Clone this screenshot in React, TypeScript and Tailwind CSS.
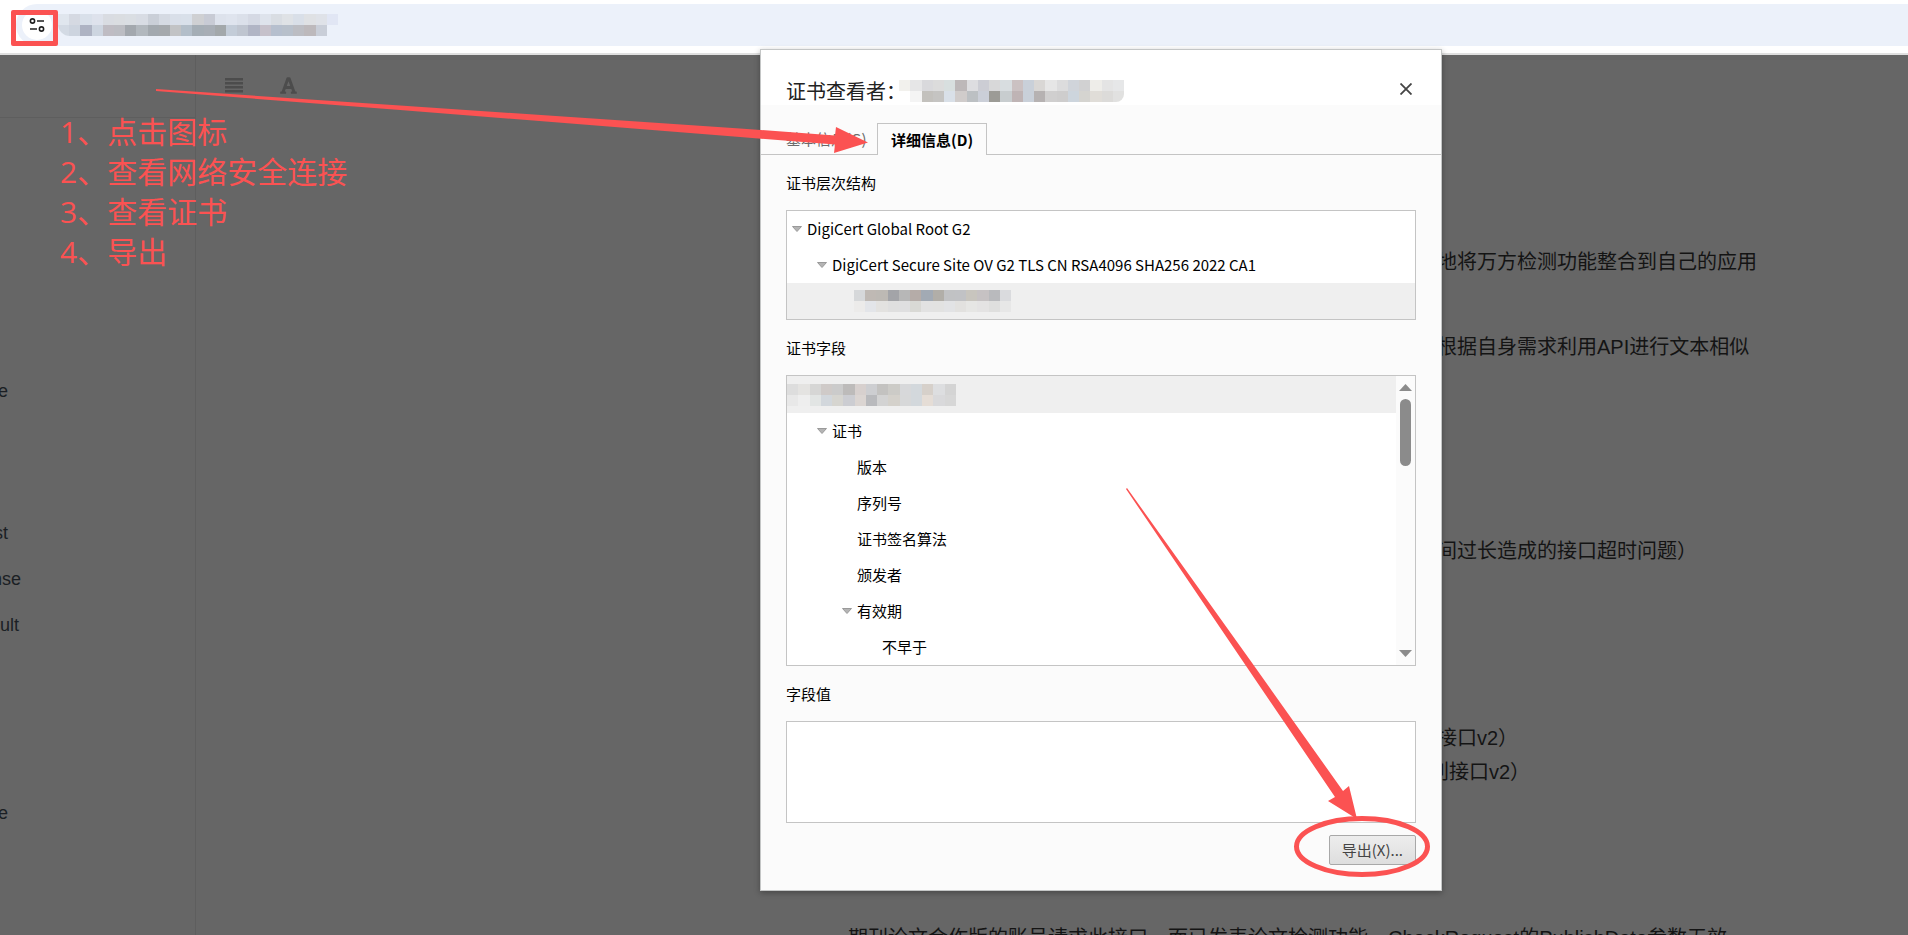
import { FaFont } from "react-icons/fa";

type TreeItem = {
  label?: string;
  level: number;
  open?: boolean;
};

const chain: TreeItem[] = [
  { label: "DigiCert Global Root G2", level: 0, open: true },
  { label: "DigiCert Secure Site OV G2 TLS CN RSA4096 SHA256 2022 CA1", level: 1, open: true },
];

const fields: TreeItem[] = [
  { label: "证书", level: 1, open: true },
  { label: "版本", level: 2 },
  { label: "序列号", level: 2 },
  { label: "证书签名算法", level: 2 },
  { label: "颁发者", level: 2 },
  { label: "有效期", level: 2, open: true },
  { label: "不早于", level: 3 },
];

const steps = ["1、点击图标", "2、查看网络安全连接", "3、查看证书", "4、导出"];

const urlBlocks = [
  "e0e6ee d5d9e2 d9e0ea dee2ec d9dce2 dadde1 dadee3 d8dce4 cacfd8 d5dae3 d9dfe9 d9e0ea cfd0d3 c8cbd5 dde2ec dfe4ee dbe0ea d5d9e4 dee3ec d9dde3 dfe2e6 d9dfe8 dfe1e4 dfe2e8 e1e6f4",
  "d3dae4 cdd4df aeb3c3 cdd5e0 bfbcc3 bcbdc3 a3a8ae b2b8be a3a9af a5a9ad c2c3c5 b3bec9 a5aeb6 a8aeb6 a3a8ab c3ccd8 bfc5d0 b1b5c5 c6c1cb b6bfce b8c0cb bcbdc3 bdb9bc c9ced8 ecf1fa",
];

const titleBlocks = [
  "f2f1ed e6e6e7 d9d9dc dcdcdc d8dfdf bdb8b9 dddde0 cccdd4 d8d8d9 d8dde0 cbc1c2 c9d0d9 d9d7d5 e6e6e6 dcdcdd d0d4da d1d1d2 eeede9 e4e4e4 e6e7e8",
  "ffffff f4f4f4 c3c1bd c5c4c2 d9e0e8 d0cccb bcc0c3 cbcfd8 9c9b96 c8cdcf bfb4b5 c9d0d9 b6b2b2 d0cfcf cecdcd cdd5dd d5d4d0 e0ddd8 dcdbd9 e1e1e0",
];

const leafBlocks = [
  "d6d8da bfb9b4 bdb9b4 a3a4a8 b7b7b7 b5aca8 a2aab4 b1aea8 c1c2c4 c1c2c5 c8c5be c6c2c3 b9babd dadbde",
  "ecebea e3e5e9 e3e2e0 dfdfdf dfdfe0 d9d9d5 e2e2e2 e2e2e1 e2e3e5 e2e1df e6e6e4 e4e3e3 dfdfde e7e7e7",
];

const fieldBlocks = [
  "dddddd e4e3e1 d6d6d5 cfcac8 cbcbcb bdbbba d7d0ce cdced1 c3c2c0 cccbc7 d7d8da d3d8dc d6d0ca dddee0 d4d4d4",
  "e8e8e8 eeeeee e2e5e4 d2d7dc d6d5d0 cccdd2 dbd5d2 b9babd d3d3d3 d4d1cb d7d8d9 d3d8dc e5ddd6 d9d9db d7d7d7",
];

function Mosaic({ rows }: { rows: string[] }) {
  return (
    <div aria-hidden="true" className="flex w-full flex-col">
      {rows.map((row) => (
        <div key={row} className="flex">
          {row.split(" ").map((color, i) => (
            <span key={i} className="h-[11px] flex-1" style={{ backgroundColor: `#${color}` }} />
          ))}
        </div>
      ))}
    </div>
  );
}

function TreeRow({ label, level, open }: TreeItem) {
  return (
    <li className="flex h-9 items-center gap-[5px]" style={{ paddingLeft: 5 + level * 25 }}>
      <svg className="h-[6px] w-[10px] shrink-0" viewBox="0 0 10 6">
        {open && <path d="M0.5 0.5h9L5 5.5z" fill="#b4b4b4" stroke="#9a9a9a" strokeWidth="1" />}
      </svg>
      <span className="whitespace-nowrap">{label}</span>
    </li>
  );
}

function AddressBar() {
  return (
    <header className="h-[55px] shrink-0 border-b-2 border-[#e0e0e0] bg-white pt-1">
      <div className="ml-4 flex h-[42px] items-center rounded-l-full bg-[#ecf1fa] pl-[6px]">
        <button aria-label="查看网站信息" className="flex h-[30px] w-[30px] items-center justify-center rounded-full bg-white">
          <svg className="h-4 w-4" viewBox="0 0 16 16" fill="none" stroke="#1f1f1f" strokeWidth="1.6">
            <circle cx="3.5" cy="4" r="2.1" />
            <path d="M8 4h7M1 12h7" />
            <circle cx="12.5" cy="12" r="2.1" />
          </svg>
        </button>
        <div className="ml-[6px] w-[280px] overflow-hidden rounded-bl-xl">
          <Mosaic rows={urlBlocks} />
        </div>
      </div>
    </header>
  );
}

function Sidebar() {
  return (
    <aside className="w-[196px] shrink-0 overflow-hidden border-r border-[#5e5e5e] text-[18px] leading-[46px] text-[#1b1f24]">
      <div className="h-[63px] border-b border-[#5e5e5e]" />
      <ul className="pt-[250px]">
        <li className="-ml-0.5">e</li>
        <li className="-ml-1.5 pt-24">st</li>
        <li className="-ml-2">nse</li>
        <li>ult</li>
        <li className="-ml-0.5 pt-[142px]">e</li>
      </ul>
    </aside>
  );
}

function Article() {
  return (
    <main className="flex-1 overflow-hidden whitespace-nowrap text-[20px] leading-[34px] text-[#141414]">
      <div className="flex h-[50px] items-center gap-9 pt-[10px] pl-[29px] text-[#4c4c4c]">
        <button aria-label="目录">
          <svg className="h-[15px] w-[18px]" viewBox="0 0 18 15" fill="currentColor">
            <path d="M0 0h18v2.4H0zM0 4h18v2.4H0zM0 8h18v2.4H0zM0 12h18v2.4H0z" />
          </svg>
        </button>
        <button aria-label="字体">
          <FaFont size={19} />
        </button>
      </div>
      <div className="pt-[140px] pl-[1241px]">
        <p>地将万方检测功能整合到自己的应用</p>
        <p className="pt-[51px]">根据自身需求利用API进行文本相似</p>
        <p className="pt-[170px]">间过长造成的接口超时问题）</p>
        <p className="pt-[153px]">接口v2）</p>
        <p className="-ml-2">别接口v2）</p>
      </div>
      <p className="pt-[132px] pl-[652px]">
        期刊论文合作版的账号请求此接口，而已发表论文检测功能，CheckRequest的PublishDate参数无效
      </p>
    </main>
  );
}

function CertificateDialog() {
  return (
    <section
      role="dialog"
      aria-labelledby="cert-title"
      className="absolute top-[49px] left-[760px] w-[682px] border border-[#c4c6c6] bg-[#fbfbfb] pb-[25px] font-['Noto_Sans_CJK_SC',sans-serif] text-[15px] leading-5 text-black shadow-[0_2px_6px_rgba(0,0,0,0.3)]"
    >
      <div className="flex h-[55px] items-center bg-white pt-[26px] pr-[29px] pl-[25px]">
        <h1 id="cert-title" className="text-[20px] leading-7 text-[#222]">证书查看者：</h1>
        <div className="-ml-[7px] w-[225px] overflow-hidden rounded-b-lg">
          <Mosaic rows={titleBlocks} />
        </div>
        <button aria-label="关闭" className="-mt-1 ml-auto">
          <svg className="h-3 w-3" viewBox="0 0 12 12" stroke="#444" strokeWidth="1.8">
            <path d="M0.5 0.5l11 11M11.5 0.5l-11 11" />
          </svg>
        </button>
      </div>

      <div role="tablist" className="flex h-[50px] items-end border-b border-[#c4c4c4] pl-[25px]">
        <button role="tab" aria-selected="false" className="h-[30px] w-[91px] text-left text-[#6b6b6b]">
          基本信息(G)
        </button>
        <button
          role="tab"
          aria-selected="true"
          className="-mb-px h-8 border border-b-0 border-[#c4c4c4] bg-[#fbfbfb] px-[13px] font-bold"
        >
          详细信息(D)
        </button>
      </div>

      <div className="px-[25px] pt-[18px]">
        <h2>证书层次结构</h2>
        <ul className="mt-[17px] border border-[#c4c4c4] bg-white">
          {chain.map((item) => (
            <TreeRow key={item.label} {...item} />
          ))}
          <li className="flex h-9 items-center bg-[#efefef] pl-[67px]">
            <div className="w-[157px]">
              <Mosaic rows={leafBlocks} />
            </div>
          </li>
        </ul>

        <h2 className="mt-[18px]">证书字段</h2>
        <div className="mt-[17px] flex h-[291px] overflow-hidden border border-[#c4c4c4] bg-white">
          <ul className="flex-1">
            <li className="flex h-[37px] items-center bg-[#efefef]">
              <div className="w-[169px]">
                <Mosaic rows={fieldBlocks} />
              </div>
            </li>
            {fields.map((item) => (
              <TreeRow key={item.label} {...item} />
            ))}
          </ul>
          <div aria-hidden="true" className="flex w-[19px] flex-col items-center bg-[#fbfbfb] py-2 text-[#8b8b8b]">
            <svg className="h-[7px] w-[13px]" viewBox="0 0 13 7" fill="currentColor">
              <path d="M6.5 0L13 7H0z" />
            </svg>
            <span className="mt-2 h-[67px] w-[11px] rounded-full bg-[#8b8b8b]" />
            <svg className="mt-auto h-[7px] w-[13px]" viewBox="0 0 13 7" fill="currentColor">
              <path d="M0 0h13L6.5 7z" />
            </svg>
          </div>
        </div>

        <label htmlFor="field-value" className="mt-[18px] block">字段值</label>
        <textarea id="field-value" readOnly className="mt-[17px] block h-[102px] w-full resize-none border border-[#c4c4c4] bg-white" />

        <button className="mt-3 ml-auto block h-[30px] rounded-xs border border-[#a8a8a8] bg-linear-to-b from-[#ededed] to-[#dedede] px-3 text-[#444]">
          导出(X)...
        </button>
      </div>
    </section>
  );
}

function Annotations() {
  return (
    <div className="pointer-events-none absolute inset-0 font-['Open_Sans','Noto_Sans_CJK_SC',sans-serif] text-[#fb5252]">
      <div className="absolute top-[10px] left-[11px] h-9 w-[47px] rounded-xs border-5 border-[#fb5252]" />
      <ol className="absolute top-[112px] left-[60px] text-[30px] leading-10">
        {steps.map((step) => (
          <li key={step}>{step}</li>
        ))}
      </ol>
      <svg className="absolute top-0 left-0 h-[935px] w-[1908px]" viewBox="0 0 1908 935" fill="currentColor">
        <path d="M156 89L400 105.5 740 128.5 835 135.5 836 127 868 142.5 834 153 835 144.5 740 137 400 110 156 91z" />
        <path d="M1127 488L1250 660 1343 791 1349 786 1357 819 1328 801 1335 797 1242 660 1126 489z" />
        <ellipse cx="1362" cy="846.5" rx="65.5" ry="28" fill="none" stroke="currentColor" strokeWidth="5" />
      </svg>
    </div>
  );
}

export default function App() {
  return (
    <div className="relative flex h-screen flex-col overflow-hidden bg-[#666] font-['Liberation_Sans','Noto_Sans_CJK_SC',sans-serif]">
      <AddressBar />
      <div className="flex min-h-0 flex-1">
        <Sidebar />
        <Article />
      </div>
      <CertificateDialog />
      <Annotations />
    </div>
  );
}
